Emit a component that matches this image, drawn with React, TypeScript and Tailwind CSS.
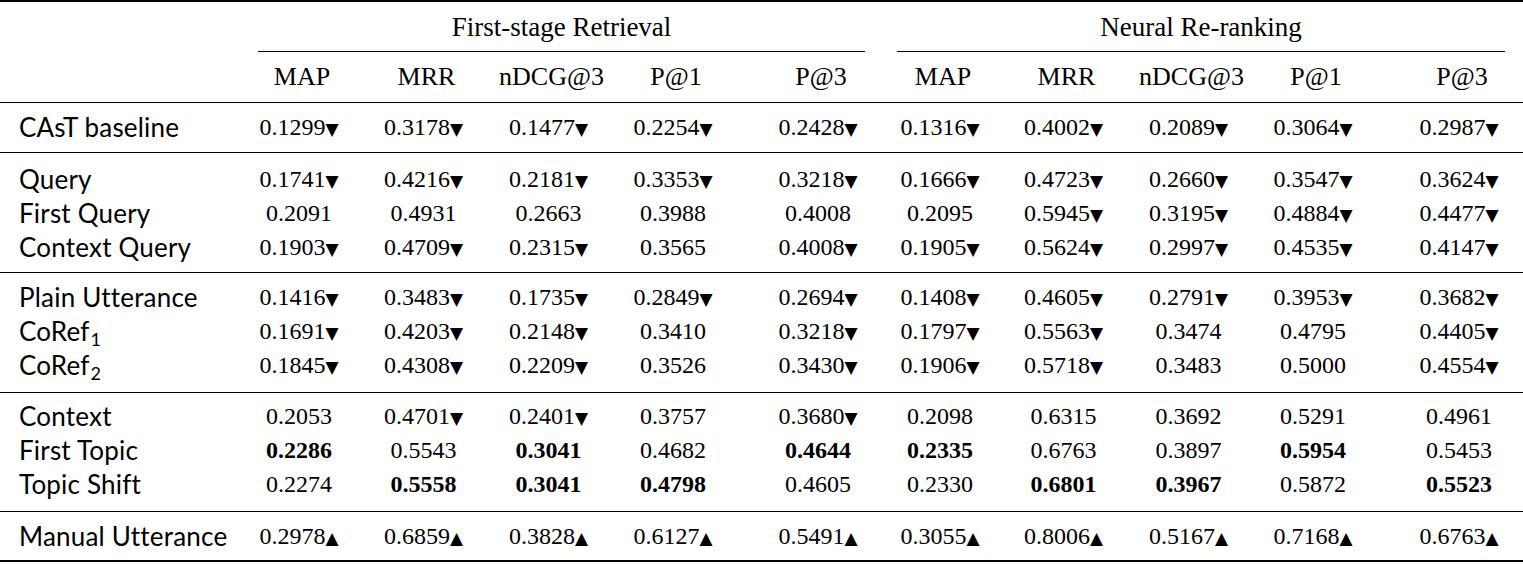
import React from 'react';

// each cell: "*" prefix = bold, "v" suffix = significantly worse, "^" suffix = better
const groups: Array<Array<{ label: React.ReactNode; cells: string[] }>> = [
    [
        { label: 'CAsT baseline', cells: ['0.1299v', '0.3178v', '0.1477v', '0.2254v', '0.2428v', '0.1316v', '0.4002v', '0.2089v', '0.3064v', '0.2987v'] },
    ],
    [
        { label: 'Query', cells: ['0.1741v', '0.4216v', '0.2181v', '0.3353v', '0.3218v', '0.1666v', '0.4723v', '0.2660v', '0.3547v', '0.3624v'] },
        { label: 'First Query', cells: ['0.2091', '0.4931', '0.2663', '0.3988', '0.4008', '0.2095', '0.5945v', '0.3195v', '0.4884v', '0.4477v'] },
        { label: 'Context Query', cells: ['0.1903v', '0.4709v', '0.2315v', '0.3565', '0.4008v', '0.1905v', '0.5624v', '0.2997v', '0.4535v', '0.4147v'] },
    ],
    [
        { label: 'Plain Utterance', cells: ['0.1416v', '0.3483v', '0.1735v', '0.2849v', '0.2694v', '0.1408v', '0.4605v', '0.2791v', '0.3953v', '0.3682v'] },
        { label: <>CoRef<span className="inline-block align-baseline relative top-[5px] text-[18px] leading-none ml-[1px]">1</span></>, cells: ['0.1691v', '0.4203v', '0.2148v', '0.3410', '0.3218v', '0.1797v', '0.5563v', '0.3474', '0.4795', '0.4405v'] },
        { label: <>CoRef<span className="inline-block align-baseline relative top-[5px] text-[18px] leading-none ml-[1px]">2</span></>, cells: ['0.1845v', '0.4308v', '0.2209v', '0.3526', '0.3430v', '0.1906v', '0.5718v', '0.3483', '0.5000', '0.4554v'] },
    ],
    [
        { label: 'Context', cells: ['0.2053', '0.4701v', '0.2401v', '0.3757', '0.3680v', '0.2098', '0.6315', '0.3692', '0.5291', '0.4961'] },
        { label: 'First Topic', cells: ['*0.2286', '0.5543', '*0.3041', '0.4682', '*0.4644', '*0.2335', '0.6763', '0.3897', '*0.5954', '0.5453'] },
        { label: 'Topic Shift', cells: ['0.2274', '*0.5558', '*0.3041', '*0.4798', '0.4605', '0.2330', '*0.6801', '*0.3967', '0.5872', '*0.5523'] },
    ],
    [
        { label: 'Manual Utterance', cells: ['0.2978^', '0.6859^', '0.3828^', '0.6127^', '0.5491^', '0.3055^', '0.8006^', '0.5167^', '0.7168^', '0.6763^'] },
    ],
];

const metrics = ['MAP', 'MRR', 'nDCG@3', 'P@1', 'P@3'];
const colWidths = [237, 124, 125, 125, 135, 133, 122, 125, 125, 135, 137];
const colPad = ['', '', '', 'pr-[11px]', 'pl-[11px]', '', '', '', 'pr-[11px]', 'pl-[9px]'];

// top / bottom padding of the rows, per group
const groupPad = [
    { top: 'pt-[7px]', bottom: 'pb-[8px]' },
    { top: 'pt-[9px]', bottom: 'pb-[8px]' },
    { top: 'pt-[7px]', bottom: 'pb-[10px]' },
    { top: 'pt-[6px]', bottom: 'pb-[10px]' },
    { top: 'pt-[7px]', bottom: 'pb-[7px]' },
];

const Cell = ({ value }: { value: string }) => {
    let v = value;
    const bold = v.startsWith('*');
    if (bold) v = v.slice(1);
    let mark = '';
    if (v.endsWith('v')) { mark = '▼'; v = v.slice(0, -1); }
    if (v.endsWith('^')) { mark = '▲'; v = v.slice(0, -1); }
    return (
        <span className={bold ? 'font-bold' : ''}>
            {v}
            {mark && <span className="inline-block leading-none font-['DejaVu_Sans'] text-[17px]">{mark}</span>}
        </span>
    );
};

const App: React.FC = () => {
    return (
        <div className="w-[1523px] h-[565px] bg-white text-black">
            <table className="w-[1523px] table-fixed border-collapse font-['Liberation_Serif',serif] text-[24px] leading-[34px]">
                <colgroup>
                    {colWidths.map((w, i) => (
                        <col key={i} style={{ width: w }} />
                    ))}
                </colgroup>
                <thead>
                    <tr className="border-t-2 border-black">
                        <th className="p-0"></th>
                        <th colSpan={5} className="p-0 pt-[8px] font-normal text-[27px]">
                            <div className="ml-[21px] mr-[14px] text-center h-[34px]">First-stage Retrieval</div>
                            <div className="ml-[21px] mr-[14px] mt-[7px] h-px bg-black"></div>
                        </th>
                        <th colSpan={5} className="p-0 pt-[8px] font-normal text-[27px]">
                            <div className="ml-[18px] mr-[18px] text-center h-[34px]">Neural Re-ranking</div>
                            <div className="ml-[18px] mr-[18px] mt-[7px] h-px bg-black"></div>
                        </th>
                    </tr>
                    <tr className="border-b border-black">
                        <th className="p-0"></th>
                        {[...metrics, ...metrics].map((m, i) => (
                            <th key={i} className={`p-0 pt-[8px] pb-[8px] font-normal text-center text-[26px] ${colPad[i]}`}>
                                <div className="h-[34px] pl-[6px]">{m}</div>
                            </th>
                        ))}
                    </tr>
                </thead>
                <tbody>
                    {groups.map((rows, g) =>
                        rows.map((row, r) => {
                            const first = r === 0;
                            const last = r === rows.length - 1;
                            const pad = `${first ? groupPad[g].top : ''} ${last ? groupPad[g].bottom : ''}`;
                            const border = last ? (g === groups.length - 1 ? 'border-b-2 border-black' : 'border-b border-black') : '';
                            return (
                                <tr key={`${g}-${r}`} className={border}>
                                    <td className={`p-0 pl-[19px] text-left whitespace-nowrap font-['Lato',sans-serif] text-[26px] tracking-[0.2px] ${pad}`}>
                                        <div className="h-[34px]">{row.label}</div>
                                    </td>
                                    {row.cells.map((c, i) => (
                                        <td key={i} className={`p-0 text-center whitespace-nowrap ${colPad[i]} ${pad}`}>
                                            <div className="h-[34px]">
                                                <Cell value={c} />
                                            </div>
                                        </td>
                                    ))}
                                </tr>
                            );
                        })
                    )}
                </tbody>
            </table>
        </div>
    );
};

export default App;
